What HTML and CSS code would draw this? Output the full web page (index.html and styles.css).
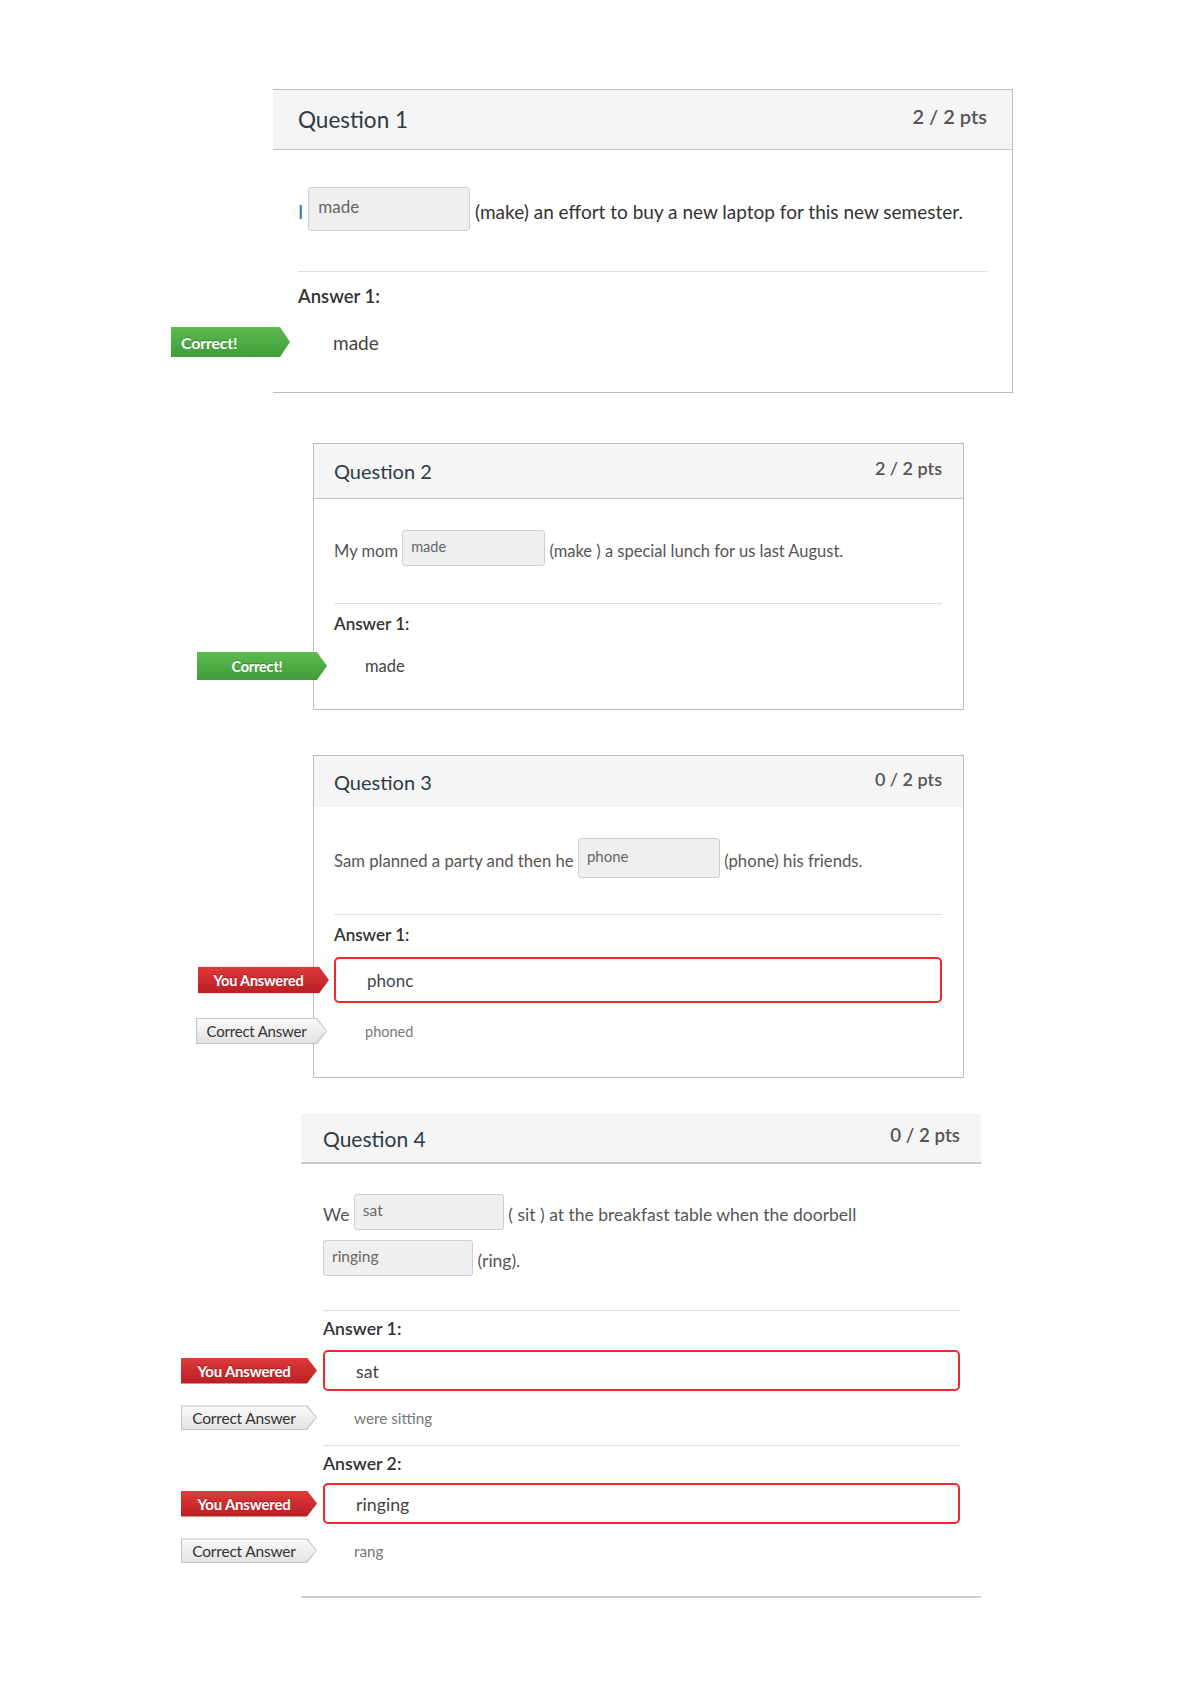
FILE: index.html
```html
<!DOCTYPE html>
<html lang="en">
<head>
    <meta charset="UTF-8">
    <title>Quiz Results</title>
    <link rel="stylesheet" href="styles.css">
</head>
<body>
<div class="page">

    <section class="question q1">
        <div class="q-head">
            <h2 class="q-title">Question 1</h2>
            <span class="q-pts">2 / 2 pts</span>
        </div>
        <div class="q-body">
            <p class="q-text"><span class="pronoun">I</span> <span class="blank">made</span> (make) an effort to buy a new laptop for this new semester.</p>
            <div class="answer">
                <h3 class="answer-label">Answer 1:</h3>
                <div class="answer-row plain">
                    <span class="badge badge-correct">Correct!</span>
                    <span class="answer-text">made</span>
                </div>
            </div>
        </div>
    </section>

    <section class="question q2">
        <div class="q-head">
            <h2 class="q-title">Question 2</h2>
            <span class="q-pts">2 / 2 pts</span>
        </div>
        <div class="q-body">
            <p class="q-text">My mom <span class="blank">made</span> (make ) a special lunch for us last August.</p>
            <div class="answer">
                <h3 class="answer-label">Answer 1:</h3>
                <div class="answer-row plain">
                    <span class="badge badge-correct">Correct!</span>
                    <span class="answer-text">made</span>
                </div>
            </div>
        </div>
    </section>

    <section class="question q3">
        <div class="q-head">
            <h2 class="q-title">Question 3</h2>
            <span class="q-pts">0 / 2 pts</span>
        </div>
        <div class="q-body">
            <p class="q-text">Sam planned a party and then he <span class="blank">phone</span> (phone) his friends.</p>
            <div class="answer">
                <h3 class="answer-label">Answer 1:</h3>
                <div class="answer-row wrong">
                    <span class="badge badge-wrong">You Answered</span>
                    <span class="answer-text">phonc</span>
                </div>
                <div class="answer-row right">
                    <span class="badge badge-right"><span>Correct Answer</span></span>
                    <span class="answer-text">phoned</span>
                </div>
            </div>
        </div>
    </section>

    <section class="question q4">
        <div class="q-head">
            <h2 class="q-title">Question 4</h2>
            <span class="q-pts">0 / 2 pts</span>
        </div>
        <div class="q-body">
            <p class="q-text">We <span class="blank">sat</span> ( sit ) at the breakfast table when the doorbell <span class="blank">ringing</span> (ring).</p>
            <div class="answer">
                <h3 class="answer-label">Answer 1:</h3>
                <div class="answer-row wrong">
                    <span class="badge badge-wrong">You Answered</span>
                    <span class="answer-text">sat</span>
                </div>
                <div class="answer-row right">
                    <span class="badge badge-right"><span>Correct Answer</span></span>
                    <span class="answer-text">were sitting</span>
                </div>
            </div>
            <div class="answer">
                <h3 class="answer-label">Answer 2:</h3>
                <div class="answer-row wrong">
                    <span class="badge badge-wrong">You Answered</span>
                    <span class="answer-text">ringing</span>
                </div>
                <div class="answer-row right">
                    <span class="badge badge-right"><span>Correct Answer</span></span>
                    <span class="answer-text">rang</span>
                </div>
            </div>
        </div>
    </section>

</div>
</body>
</html>
```

FILE: styles.css
```css
body {
    margin: 0;
    background: #fff;
    font-family: Lato, "Open Sans", Arial, sans-serif;
    color: #3d3d3d;
}
.page {
    padding-top: 89px;
    padding-bottom: 100px;
}

/* question box */
.question {
    box-sizing: border-box;
    border: 1px solid #bdbdbd;
    background: #fff;
}
.q-head {
    display: flex;
    justify-content: space-between;
    align-items: center;
    box-sizing: border-box;
    background: #f5f5f5;
    border-bottom: 1px solid #c4c4c4;
}
.q-title {
    margin: 0;
    font-size: 20px;
    font-weight: 400;
    color: #2d3b45;
}
.q-pts {
    font-size: 18px;
    font-weight: 600;
    color: #555;
    margin-top: -6px;
}
.q-text {
    margin: 0;
    font-size: 16.5px;
    color: #555;
}
.pronoun {
    color: #2a6fb0;
}
.blank {
    display: inline-flex;
    align-items: center;
    vertical-align: 5px;
    box-sizing: border-box;
    height: 36px;
    width: 143px;
    padding: 0 8px 4px;
    background: #efefef;
    border: 1px solid #cfcfcf;
    border-radius: 3px;
    font-size: 14.5px;
    color: #666;
}
.answer {
    border-top: 1px solid #dedede;
}
.answer-label {
    margin: 0;
    font-size: 17px;
    line-height: 22px;
    font-weight: 600;
    color: #333;
}
.answer-row {
    position: relative;
    display: flex;
    align-items: center;
    box-sizing: border-box;
}
.answer-text {
    padding-left: 31px;
    font-size: 16.5px;
    color: #444;
}
.answer-row.wrong {
    height: 46px;
    border: 2px solid #ee2a2f;
    border-radius: 5px;
}
.answer-row.wrong .answer-text {
    font-size: 17px;
}
.answer-row.right {
    height: 26px;
}
.answer-row.right .answer-text {
    font-size: 14.5px;
    color: #777;
}

/* arrow labels hanging left of the answer */
.badge {
    position: absolute;
    right: calc(100% + 7px);
    top: 50%;
    transform: translateY(-50%);
    box-sizing: border-box;
    width: 130px;
    height: 28px;
    padding-right: 10px;
    display: flex;
    align-items: center;
    justify-content: center;
    font-size: 14.5px;
    font-weight: 700;
    letter-spacing: -0.2px;
    clip-path: polygon(0 0, calc(100% - 10px) 0, 100% 50%, calc(100% - 10px) 100%, 0 100%);
}
.answer-row.wrong .badge {
    right: calc(100% + 8px);
}
.badge-correct {
    color: #fff;
    background: linear-gradient(#5dbb4f, #3f9c3a);
    text-shadow: 0 -1px 0 rgba(0, 0, 0, 0.25);
}
.badge-wrong {
    height: 27px;
    color: #fff;
    background: linear-gradient(#de3a3a, #b91f24);
    text-shadow: 0 -1px 0 rgba(0, 0, 0, 0.3);
}
.badge-right {
    height: 26px;
    padding: 1px;
    background: #c2c2c2;
}
.badge-right span {
    width: 100%;
    height: 100%;
    box-sizing: border-box;
    padding-right: 10px;
    display: flex;
    align-items: center;
    justify-content: center;
    font-size: 15px;
    font-weight: 400;
    color: #333;
    background: linear-gradient(#fafafa, #e2e2e2);
    clip-path: polygon(0 0, calc(100% - 10px) 0, 100% 50%, calc(100% - 10px) 100%, 0 100%);
}

/* question 1 */
.q1 {
    margin-left: 273px;
    width: 740px;
    border-left: none;
}
.q1 .q-head {
    height: 60px;
    padding: 0 25px;
}
.q1 .q-title {
    font-size: 22.5px;
}
.q1 .q-pts {
    font-size: 20px;
    margin-top: -8px;
}
.q1 .q-body {
    padding: 37px 25px 35px;
}
.q1 .q-text {
    font-size: 19px;
    color: #333;
}
.q1 .blank {
    width: 162px;
    height: 44px;
    padding: 0 9px 5px;
    font-size: 17px;
    vertical-align: 6px;
}
.q1 .answer {
    margin-top: 40px;
    padding-top: 12px;
}
.q1 .answer-label {
    font-size: 18.5px;
    line-height: 24px;
}
.q1 .answer-row.plain {
    height: 30px;
    margin-top: 19px;
}
.q1 .badge {
    width: 119px;
    height: 30px;
    right: calc(100% + 8px);
    justify-content: flex-start;
    padding-left: 10px;
    font-size: 16px;
}
.q1 .answer-text {
    font-size: 19px;
    padding-left: 35px;
}

/* question 2 */
.q2 {
    margin-top: 50px;
    margin-left: 313px;
    width: 651px;
}
.q2 .q-head {
    height: 55px;
    padding: 0 21px 0 20px;
}
.q2 .q-body {
    padding: 31px 21px 29px 20px;
}
.q2 .answer {
    margin-top: 37px;
    padding-top: 9px;
}
.q2 .answer-row.plain {
    height: 28px;
    margin-top: 17px;
}

/* question 3 */
.q3 {
    margin-top: 45px;
    margin-left: 313px;
    width: 651px;
}
.q3 .q-head {
    height: 51px;
    padding: 0 21px 0 20px;
    border-bottom: none;
}
.q3 .q-body {
    padding: 31px 21px 33px 20px;
}
.q3 .q-text {
    font-size: 16.7px;
}
.q3 .blank {
    height: 40px;
    width: 142px;
    font-size: 15px;
}
.q3 .answer {
    margin-top: 36px;
    padding-top: 9px;
}
.q3 .answer-row.wrong {
    margin-top: 11px;
}
.q3 .answer-row.right {
    margin-top: 15px;
}
.q3 .badge {
    width: 131px;
}
.q3 .answer-row.wrong .badge {
    right: calc(100% + 7px);
}

/* question 4 */
.q4 {
    margin-top: 36px;
    margin-left: 301px;
    width: 680px;
    border: none;
    border-bottom: 2px solid #cfcfcf;
}
.q4 .q-head {
    height: 50px;
    padding: 0 21px 0 22px;
    border-bottom: 2px solid #c9c9c9;
}
.q4 .q-title {
    font-size: 21px;
}
.q4 .q-pts {
    font-size: 18.7px;
}
.q4 .q-body {
    padding: 25px 21px 33px 22px;
}
.q4 .q-text {
    font-size: 17.5px;
    line-height: 36px;
}
.q4 .blank {
    width: 150px;
    margin: 5px 0;
    font-size: 15.5px;
}
.q4 .answer:first-of-type {
    margin-top: 29px;
}
.q4 .answer {
    padding-top: 7px;
}
.q4 .answer-label {
    font-size: 17.7px;
}
.q4 .answer-row.wrong {
    height: 41px;
    margin-top: 10px;
}
.q4 .answer-row.right {
    height: 25px;
    margin-top: 14px;
    margin-bottom: 15px;
}
.q4 .answer-row.wrong .answer-text {
    font-size: 17.8px;
}
.q4 .answer-row.right .answer-text {
    font-size: 15.3px;
}
.q4 .answer:last-child .answer-row.wrong {
    margin-top: 8px;
}
.q4 .answer:last-child .answer-row.right {
    margin-bottom: 0;
}
.q4 .badge {
    width: 136px;
    height: 26px;
    right: calc(100% + 6px);
    font-size: 15px;
}
.q4 .badge-right {
    height: 25px;
}
.q4 .badge-right span {
    font-size: 15.5px;
}
```
